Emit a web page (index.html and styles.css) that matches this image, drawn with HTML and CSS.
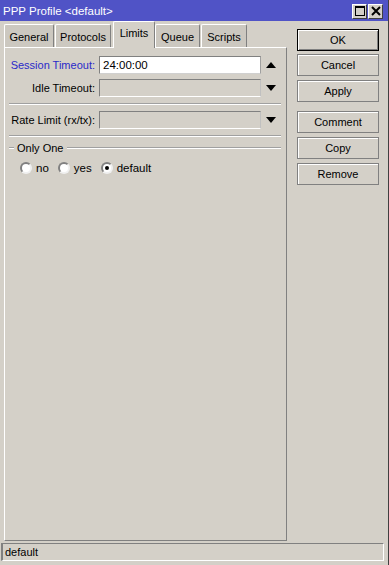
FILE: index.html
```html
<!DOCTYPE html>
<html>
<head>
<meta charset="utf-8">
<link rel="stylesheet" href="styles.css">
</head>
<body>
<div class="window">
  <div class="titlebar">
    <span class="title">PPP Profile &lt;default&gt;</span>
    <div class="tb-buttons">
      <span class="tb-btn"><svg width="10" height="10" viewBox="0 0 10 10"><rect x="0.5" y="0.5" width="9" height="9" fill="none" stroke="#000" stroke-width="1"/><rect x="0" y="0" width="10" height="2" fill="#000"/></svg></span>
      <span class="tb-btn"><svg width="10" height="10" viewBox="0 0 10 10"><path d="M1 1 L9 9 M9 1 L1 9" stroke="#000" stroke-width="2"/></svg></span>
    </div>
  </div>
  <div class="main">
    <div class="left">
      <div class="tabs">
        <span class="tab">General</span>
        <span class="tab">Protocols</span>
        <span class="tab active">Limits</span>
        <span class="tab">Queue</span>
        <span class="tab">Scripts</span>
      </div>
      <div class="panel">
        <div class="row">
          <span class="label blue">Session Timeout:</span>
          <span class="input white">24:00:00</span>
          <span class="arrow"><svg width="10" height="6" viewBox="0 0 10 6"><polygon points="5,0 10,6 0,6" fill="#000"/></svg></span>
        </div>
        <div class="row">
          <span class="label">Idle Timeout:</span>
          <span class="input"></span>
          <span class="arrow"><svg width="10" height="6" viewBox="0 0 10 6"><polygon points="0,0 10,0 5,6" fill="#000"/></svg></span>
        </div>
        <div class="sep"></div>
        <div class="row">
          <span class="label">Rate Limit (rx/tx):</span>
          <span class="input"></span>
          <span class="arrow"><svg width="10" height="6" viewBox="0 0 10 6"><polygon points="0,0 10,0 5,6" fill="#000"/></svg></span>
        </div>
        <div class="sep"></div>
        <div class="group">
          <span class="gline short"></span>
          <span class="glabel">Only One</span>
          <span class="gline long"></span>
        </div>
        <div class="radios">
          <span class="radio"><span class="circle"></span>no</span>
          <span class="radio"><span class="circle"></span>yes</span>
          <span class="radio"><span class="circle checked"></span>default</span>
        </div>
      </div>
    </div>
    <div class="buttons">
      <span class="btn default">OK</span>
      <span class="btn">Cancel</span>
      <span class="btn">Apply</span>
      <span class="btn spaced">Comment</span>
      <span class="btn">Copy</span>
      <span class="btn">Remove</span>
    </div>
  </div>
  <div class="status">default</div>
</div>
</body>
</html>
```
FILE: styles.css
```css
* { box-sizing: border-box; }
html, body {
  margin: 0;
  padding: 0;
  background: #d4d0c8;
}
body {
  font-family: "Liberation Sans", Arial, sans-serif;
  font-size: 11px;
  color: #000;
}
.window {
  width: 389px;
  height: 565px;
  display: flex;
  flex-direction: column;
  border-right: 1px solid #404040;
  overflow: hidden;
}
.titlebar {
  height: 21px;
  background: #5053c6;
  display: flex;
  align-items: center;
  justify-content: space-between;
  padding: 0 5px 0 3px;
  color: #fff;
  font-size: 11.5px;
}
.tb-buttons {
  display: flex;
  gap: 1px;
  margin-top: 1px;
}
.tb-btn {
  width: 15px;
  height: 15px;
  background: #d4d0c8;
  border: 1px solid;
  border-color: #fff #404040 #404040 #fff;
  display: flex;
  align-items: center;
  justify-content: center;
}
.main {
  height: 522px;
  display: flex;
  padding: 1px 0 0 4px;
}
.left {
  width: 283px;
  display: flex;
  flex-direction: column;
}
.tabs {
  height: 25px;
  display: flex;
  align-items: flex-end;
  position: relative;
  z-index: 1;
}
.tab {
  height: 23px;
  display: flex;
  align-items: center;
  justify-content: center;
  background: #ccc8c0;
  border: 1px solid;
  border-bottom: none;
  border-color: #fff #808080 #808080 #fff;
  border-radius: 2px 2px 0 0;
  margin-right: 1px;
  padding: 1px 0 0;
}
.tab:nth-child(1) { width: 50px; }
.tab:nth-child(2) { width: 56px; }
.tab.active {
  height: 27px;
  width: 42px;
  padding: 0 0 4px;
  background: #d4d0c8;
  margin-bottom: -1px;
  margin-left: 1px;
  margin-right: 0;
}
.tab:nth-child(4) { width: 45px; }
.tab:nth-child(5) { width: 46px; }
.panel {
  height: 494px;
  border: 1px solid;
  border-color: #fff #808080 #808080 #fff;
  padding-top: 8px;
  display: flex;
  flex-direction: column;
}
.row {
  display: flex;
  align-items: center;
  height: 18px;
  margin-bottom: 5px;
}
.label {
  width: 90px;
  text-align: right;
  margin-right: 4px;
  white-space: nowrap;
}
.label.blue { color: #2a2ac8; }
.input {
  width: 162px;
  height: 18px;
  border: 1px solid;
  border-color: #808080 #c0c0c0 #fff #808080;
  background: #d4d0c8;
  padding: 1px 0 0 3px;
  line-height: 14px;
  font-size: 11.5px;
}
.input.white { background: #fff; border-color: #808080 #a0a0a0 #d0d0d0 #808080; }
.arrow {
  width: 20px;
  display: flex;
  justify-content: center;
  align-items: center;
}
.sep {
  height: 2px;
  border-top: 1px solid #a0a0a0;
  border-bottom: 1px solid #fff;
  margin: 1px 5px 6px 4px;
}
.group {
  display: flex;
  align-items: center;
  height: 13px;
  margin: -2px 5px 7px 4px;
}
.gline {
  height: 2px;
  border-top: 1px solid #a0a0a0;
  border-bottom: 1px solid #fff;
}
.gline.short { width: 5px; }
.gline.long { flex: 1; }
.glabel {
  padding: 0 4px 0 3px;
}
.radios {
  display: flex;
  align-items: center;
  padding-left: 15px;
  height: 13px;
  font-size: 11.5px;
}
.radio {
  display: flex;
  align-items: center;
  margin-right: 9px;
}
.circle {
  width: 12px;
  height: 12px;
  border-radius: 50%;
  border: 2px solid;
  border-color: #808080 #f0f0f0 #f0f0f0 #808080;
  background: #fff;
  margin-right: 4px;
  display: flex;
  align-items: center;
  justify-content: center;
}
.circle.checked::after {
  content: "";
  width: 4px;
  height: 4px;
  border-radius: 50%;
  background: #000;
}
.buttons {
  margin-left: 10px;
  padding-top: 7px;
  display: flex;
  flex-direction: column;
  gap: 4px;
}
.btn {
  width: 82px;
  height: 22px;
  border: 1px solid #808080;
  box-shadow: inset 1px 1px 0 #fff;
  display: flex;
  align-items: center;
  justify-content: center;
}
.btn.default {
  border: 1px solid #000;
  box-shadow: inset 1px 1px 0 #fff, inset -1px -1px 0 #808080;
  margin-bottom: -1px;
}
.btn.spaced { margin-top: 5px; }
.status {
  height: 18px;
  margin: 0 4px 4px 1px;
  border: 1px solid;
  border-color: #808080 #fff #fff #808080;
  border-left-width: 2px;
  padding-left: 2px;
  display: flex;
  align-items: center;
}
```
